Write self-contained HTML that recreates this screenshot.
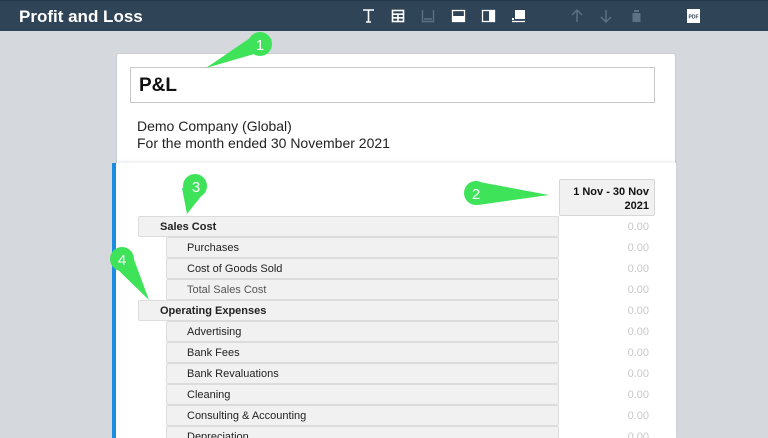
<!DOCTYPE html>
<html style="width:768px;height:438px;overflow:hidden"><head><meta charset="utf-8"><style>
*{box-sizing:border-box;margin:0;padding:0}
body{width:768px;height:438px;overflow:hidden;background:#d5d8dc;font-family:"Liberation Sans",Arial,sans-serif;position:relative}
.hdr{position:absolute;left:0;top:0;width:768px;height:31px;background:#2f4457;border-top:1px solid #26384a}
.hdr h1{position:absolute;left:19px;top:6px;color:#fff;font-size:17px;font-weight:bold}
.card{position:absolute;left:116px;top:53px;width:560px;height:385px;background:#fff;border:1px solid #c9ccd0;border-bottom:none;border-radius:3px 3px 0 0}
.title{position:absolute;left:130px;top:67px;width:525px;height:36px;border:1px solid #c7c7c7;background:#fff;font-size:19px;font-weight:bold;color:#111;padding:7px 0 0 8px}
.sub{position:absolute;left:137px;top:118px;font-size:14px;color:#222;line-height:17px}
.lower{position:absolute;left:116px;top:163px;width:560px;height:275px;background:#fff;box-shadow:0 -2px 3px rgba(0,0,0,.06)}
.blue{position:absolute;left:112px;top:163px;width:4px;height:275px;background:#1b8ce0}
.colh{position:absolute;left:559px;top:179px;width:96px;height:37px;background:#f1f1f1;border:1px solid #d6d6d6;border-radius:2px;font-size:11px;font-weight:bold;text-align:right;padding:5px 5px 0 0;line-height:14px;color:#111}
.row{position:absolute;height:21px;background:#f1f1f1;border:1px solid #dcdcdc;border-radius:2px;font-size:11px;color:#222;padding-top:4px;overflow:hidden}
.h{left:138px;width:421px;font-weight:bold;padding-left:21px}
.c{left:166px;width:393px;padding-left:20px}
.v{position:absolute;left:560px;width:89px;text-align:right;font-size:11px;color:#c8c8c8}
svg{position:absolute;left:0;top:0}
</style></head><body>
<div class="hdr"><h1>Profit and Loss</h1></div>
<svg width="768" height="32" style="z-index:2">
<g fill="none" stroke="#fff" stroke-width="1.6">
<path d="M363 10H374M368.5 10V22M366 22H371"/>
<rect x="392.5" y="10.5" width="11" height="11"/><path d="M392.5 14.2H403.5M392.5 17.8H403.5M398 14V21.5"/>
</g>
<g fill="none" stroke="#5d7084" stroke-width="1.4"><path d="M422.5 10V21.5H433.5V10M424 19H432"/></g>
<rect x="452.5" y="10.5" width="12" height="11" fill="none" stroke="#fff" stroke-width="1.3"/><rect x="452" y="16" width="13" height="6" fill="#fff"/>
<rect x="482.5" y="10.5" width="12" height="11" fill="none" stroke="#fff" stroke-width="1.3"/><rect x="489" y="10" width="6" height="12" fill="#fff"/>
<rect x="515" y="10" width="10" height="9" fill="#fff"/><path d="M512 21.5H525" stroke="#fff" stroke-width="1.3"/><rect x="512" y="18" width="2" height="2" fill="#fff"/>
<g fill="none" stroke="#5d7084" stroke-width="1.5"><path d="M577 22V10M572 15L577 10L582 15"/><path d="M606 10V22M601 17L606 22L611 17"/></g>
<path d="M631 12H642M634 12V10H639V12M632.5 13H640.5V22H632.5Z" fill="#5d7084"/>
<rect x="687" y="9" width="13" height="14" fill="#fff"/><text x="693.5" y="18.5" font-size="5" font-weight="bold" text-anchor="middle" fill="#2f4457" font-family="Liberation Sans">PDF</text>
</svg>
<div class="card"></div>
<div class="title">P&amp;L</div>
<div class="sub">Demo Company (Global)<br>For the month ended 30 November 2021</div>
<div class="lower"></div>
<div class="blue"></div>
<div class="colh">1 Nov - 30 Nov<br>2021</div>
<div class="row h" style="top:216px">Sales Cost</div>
<div class="row c" style="top:237px">Purchases</div>
<div class="row c" style="top:258px">Cost of Goods Sold</div>
<div class="row c" style="top:279px;color:#555">Total Sales Cost</div>
<div class="row h" style="top:300px">Operating Expenses</div>
<div class="row c" style="top:321px">Advertising</div>
<div class="row c" style="top:342px">Bank Fees</div>
<div class="row c" style="top:363px">Bank Revaluations</div>
<div class="row c" style="top:384px">Cleaning</div>
<div class="row c" style="top:405px">Consulting &amp; Accounting</div>
<div class="row c" style="top:426px">Depreciation</div>
<div class="v" style="top:221px">0.00</div><div class="v" style="top:242px">0.00</div><div class="v" style="top:263px">0.00</div><div class="v" style="top:284px">0.00</div><div class="v" style="top:305px">0.00</div><div class="v" style="top:326px">0.00</div><div class="v" style="top:347px">0.00</div><div class="v" style="top:368px">0.00</div><div class="v" style="top:389px">0.00</div><div class="v" style="top:410px">0.00</div><div class="v" style="top:431px">0.00</div>
<svg width="768" height="438" style="z-index:3">
<g fill="#3ee35a">
<path d="M206 68L250 38L268 50Z"/><circle cx="260" cy="44" r="12"/>
<path d="M549 195L474 181L478 205Z"/><circle cx="476" cy="193" r="12"/>
<path d="M187 214L182 188L206 190Z"/><circle cx="195" cy="186" r="12"/>
<path d="M149 300L112 264L132 254Z"/><circle cx="122" cy="259" r="12"/>
</g>
<g fill="#fff" font-family="Liberation Sans" font-size="15" text-anchor="middle">
<text x="260" y="50">1</text><text x="476" y="199">2</text><text x="196" y="192">3</text><text x="122" y="265">4</text>
</g>
</svg>
</body></html>
